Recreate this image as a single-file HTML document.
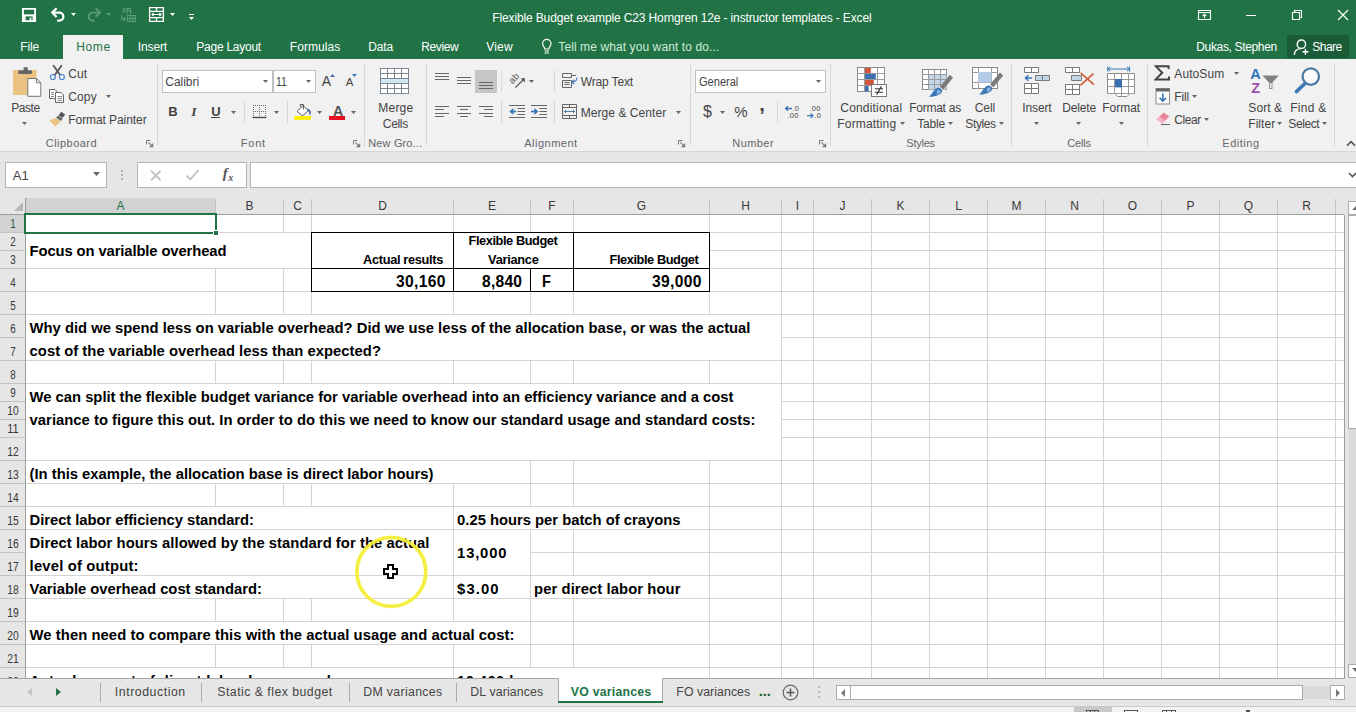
<!DOCTYPE html>
<html><head><meta charset="utf-8"><title>Excel</title><style>
html,body{margin:0;padding:0;}
body{width:1356px;height:712px;overflow:hidden;position:relative;background:#fff;font-family:"Liberation Sans", sans-serif;}
#r{position:absolute;left:0;top:0;width:1356px;height:712px;overflow:hidden;}
#r div,#r svg,#r span{position:absolute;}
#r span{white-space:pre;line-height:1;}
</style></head><body><div id="r">
<div style="left:0px;top:0px;width:1356px;height:59px;background:#217346;"></div>
<div style="left:0px;top:59px;width:1356px;height:93px;background:#f1f1f1;"></div>
<div style="left:0px;top:151px;width:1356px;height:1px;background:#d6d6d6;"></div>
<div style="left:0px;top:152px;width:1356px;height:46px;background:#e6e6e6;"></div>
<div style="left:63px;top:35px;width:60px;height:25px;background:#f1f1f1;"></div>
<div style="left:1287px;top:35px;width:62px;height:23px;background:#1a5c38;"></div>
<span style="top:11px;line-height:14px;font-size:12px;color:#ffffff;letter-spacing:-0.136px;left:492.30px;">Flexible Budget example C23 Horngren 12e - instructor templates - Excel</span>
<span style="top:40px;line-height:14px;font-size:12px;color:#ffffff;letter-spacing:-0.168px;left:20.30px;">File</span>
<span style="top:40px;line-height:14px;font-size:12px;color:#217346;letter-spacing:0.608px;left:76.30px;">Home</span>
<span style="top:40px;line-height:14px;font-size:12px;color:#ffffff;letter-spacing:-0.135px;left:137.80px;">Insert</span>
<span style="top:40px;line-height:14px;font-size:12px;color:#ffffff;letter-spacing:-0.255px;left:196.30px;">Page Layout</span>
<span style="top:40px;line-height:14px;font-size:12px;color:#ffffff;letter-spacing:0.046px;left:289.80px;">Formulas</span>
<span style="top:40px;line-height:14px;font-size:12px;color:#ffffff;letter-spacing:-0.173px;left:368.30px;">Data</span>
<span style="top:40px;line-height:14px;font-size:12px;color:#ffffff;letter-spacing:-0.404px;left:421.30px;">Review</span>
<span style="top:40px;line-height:14px;font-size:12px;color:#ffffff;letter-spacing:0.181px;left:486.30px;">View</span>
<span style="top:40px;line-height:14px;font-size:12px;color:#d2ebdb;letter-spacing:0.095px;left:558.30px;">Tell me what you want to do...</span>
<span style="top:40px;line-height:14px;font-size:12px;color:#ffffff;letter-spacing:-0.350px;left:1196.30px;">Dukas, Stephen</span>
<span style="top:40px;line-height:14px;font-size:12px;color:#ffffff;letter-spacing:-0.548px;left:1312.30px;">Share</span>
<span style="top:137px;line-height:12px;font-size:11px;color:#666666;letter-spacing:0.460px;left:45.80px;">Clipboard</span>
<span style="top:137px;line-height:12px;font-size:11px;color:#666666;letter-spacing:0.751px;left:240.80px;">Font</span>
<span style="top:137px;line-height:12px;font-size:11px;color:#666666;letter-spacing:0.132px;left:368.30px;">New Gro...</span>
<span style="top:137px;line-height:12px;font-size:11px;color:#666666;letter-spacing:0.481px;left:524.30px;">Alignment</span>
<span style="top:137px;line-height:12px;font-size:11px;color:#666666;letter-spacing:0.429px;left:732.30px;">Number</span>
<span style="top:137px;line-height:12px;font-size:11px;color:#666666;letter-spacing:-0.240px;left:906.30px;">Styles</span>
<span style="top:137px;line-height:12px;font-size:11px;color:#666666;letter-spacing:-0.171px;left:1067.30px;">Cells</span>
<span style="top:137px;line-height:12px;font-size:11px;color:#666666;letter-spacing:0.522px;left:1222.30px;">Editing</span>
<div style="left:157px;top:64px;width:1px;height:82px;background:#d8d8d8;"></div>
<div style="left:364px;top:64px;width:1px;height:82px;background:#d8d8d8;"></div>
<div style="left:426px;top:64px;width:1px;height:82px;background:#d8d8d8;"></div>
<div style="left:690px;top:64px;width:1px;height:82px;background:#d8d8d8;"></div>
<div style="left:830px;top:64px;width:1px;height:82px;background:#d8d8d8;"></div>
<div style="left:1011px;top:64px;width:1px;height:82px;background:#d8d8d8;"></div>
<div style="left:1147px;top:64px;width:1px;height:82px;background:#d8d8d8;"></div>
<div style="left:1334px;top:64px;width:1px;height:82px;background:#d8d8d8;"></div>
<span style="top:101px;line-height:14px;font-size:12px;color:#444444;letter-spacing:-0.462px;left:11.30px;">Paste</span>
<svg style="left:22.0px;top:121.8px" width="5" height="3" viewBox="0 0 5 3"><path d="M0 0H5L2.5 3Z" fill="#666"/></svg>
<span style="top:67px;line-height:14px;font-size:12px;color:#444444;letter-spacing:0.076px;left:68.30px;">Cut</span>
<span style="top:90px;line-height:14px;font-size:12px;color:#444444;letter-spacing:0.108px;left:68.30px;">Copy</span>
<svg style="left:106.0px;top:94.5px" width="5" height="3" viewBox="0 0 5 3"><path d="M0 0H5L2.5 3Z" fill="#666"/></svg>
<span style="top:113px;line-height:14px;font-size:12px;color:#444444;letter-spacing:-0.078px;left:68.30px;">Format Painter</span>
<div style="left:162px;top:70px;width:111px;height:23px;background:#fff;border:1px solid #c0c0c0;box-sizing:border-box;"></div>
<div style="left:273px;top:70px;width:43px;height:23px;background:#fff;border:1px solid #c0c0c0;box-sizing:border-box;"></div>
<span style="top:75px;line-height:14px;font-size:12px;color:#444444;letter-spacing:-0.029px;left:165.30px;">Calibri</span>
<svg style="left:262.9px;top:80.0px" width="5" height="3" viewBox="0 0 5 3"><path d="M0 0H5L2.5 3Z" fill="#666"/></svg>
<span style="top:75px;line-height:14px;font-size:12px;color:#444444;transform:scaleX(0.8694);transform-origin:0 0;left:276.30px;">11</span>
<svg style="left:305.9px;top:80.0px" width="5" height="3" viewBox="0 0 5 3"><path d="M0 0H5L2.5 3Z" fill="#666"/></svg>
<span style="top:73px;line-height:16px;font-size:14px;color:#444444;letter-spacing:1.136px;left:321.80px;">A</span>
<span style="top:76px;line-height:12px;font-size:11.5px;color:#444444;letter-spacing:0.633px;left:345.80px;">A</span>
<svg style="left:330px;top:74px" width="5" height="3"><path d="M0 3H5L2.5 0Z" fill="#4f709c"/></svg>
<svg style="left:352px;top:74px" width="5" height="3"><path d="M0 0H5L2.5 3Z" fill="#3b78b8"/></svg>
<span style="top:104px;line-height:15px;font-size:13px;color:#444444;font-weight:700;letter-spacing:-0.481px;left:168.30px;">B</span>
<span style="top:104px;line-height:15px;font-size:13.5px;color:#444444;font-weight:700;font-style:italic;font-family:'Liberation Serif',serif;left:191.30px;">I</span>
<span style="top:104px;line-height:15px;font-size:13px;color:#444444;font-weight:700;letter-spacing:0.519px;left:211.30px;">U</span>
<div style="left:211px;top:117px;width:9.4px;height:1.4px;background:#444444;"></div>
<svg style="left:230.9px;top:110.8px" width="5" height="3" viewBox="0 0 5 3"><path d="M0 0H5L2.5 3Z" fill="#666"/></svg>
<div style="left:244px;top:101px;width:1px;height:22px;background:#d8d8d8;"></div>
<svg style="left:273.9px;top:110.8px" width="5" height="3" viewBox="0 0 5 3"><path d="M0 0H5L2.5 3Z" fill="#666"/></svg>
<div style="left:287px;top:101px;width:1px;height:22px;background:#d8d8d8;"></div>
<svg style="left:317.0px;top:110.5px" width="5" height="3" viewBox="0 0 5 3"><path d="M0 0H5L2.5 3Z" fill="#666"/></svg>
<svg style="left:351.0px;top:110.5px" width="5" height="3" viewBox="0 0 5 3"><path d="M0 0H5L2.5 3Z" fill="#666"/></svg>
<span style="top:101px;line-height:14px;font-size:12px;color:#444444;letter-spacing:0.206px;left:378.30px;">Merge</span>
<span style="top:117px;line-height:14px;font-size:12px;color:#444444;letter-spacing:-0.333px;left:382.80px;">Cells</span>
<div style="left:474.5px;top:70px;width:22.5px;height:22.5px;background:#c6c6c6;"></div>
<div style="left:501px;top:70px;width:1px;height:22px;background:#d8d8d8;"></div>
<div style="left:501px;top:101px;width:1px;height:22px;background:#d8d8d8;"></div>
<div style="left:554px;top:70px;width:1px;height:22px;background:#d8d8d8;"></div>
<div style="left:554px;top:101px;width:1px;height:22px;background:#d8d8d8;"></div>
<svg style="left:529.1px;top:79.8px" width="5" height="3" viewBox="0 0 5 3"><path d="M0 0H5L2.5 3Z" fill="#666"/></svg>
<span style="top:75px;line-height:14px;font-size:12px;color:#444444;letter-spacing:-0.155px;left:580.80px;">Wrap Text</span>
<span style="top:106px;line-height:14px;font-size:12px;color:#444444;letter-spacing:0.049px;left:580.80px;">Merge &amp; Center</span>
<svg style="left:676.0px;top:110.5px" width="5" height="3" viewBox="0 0 5 3"><path d="M0 0H5L2.5 3Z" fill="#666"/></svg>
<div style="left:695px;top:70px;width:131px;height:23px;background:#fff;border:1px solid #c0c0c0;box-sizing:border-box;"></div>
<span style="top:75px;line-height:14px;font-size:12px;color:#444444;transform:scaleX(0.9212);transform-origin:0 0;left:699.30px;">General</span>
<svg style="left:816.0px;top:80.0px" width="5" height="3" viewBox="0 0 5 3"><path d="M0 0H5L2.5 3Z" fill="#666"/></svg>
<span style="top:103px;line-height:17px;font-size:16px;color:#444444;letter-spacing:-0.286px;left:703.10px;">$</span>
<svg style="left:720.0px;top:110.5px" width="5" height="3" viewBox="0 0 5 3"><path d="M0 0H5L2.5 3Z" fill="#666"/></svg>
<span style="top:103px;line-height:17px;font-size:15px;color:#444444;letter-spacing:0.706px;left:734.30px;">%</span>
<span style="top:93px;line-height:22px;font-size:20px;color:#444444;font-weight:700;left:759.30px;">,</span>
<div style="left:777px;top:101px;width:1px;height:22px;background:#d8d8d8;"></div>
<span style="top:101px;line-height:14px;font-size:12px;color:#444444;letter-spacing:0.179px;left:840.30px;">Conditional</span>
<span style="top:117px;line-height:14px;font-size:12px;color:#444444;letter-spacing:0.165px;left:837.30px;">Formatting</span>
<svg style="left:899.5px;top:121.5px" width="5" height="3" viewBox="0 0 5 3"><path d="M0 0H5L2.5 3Z" fill="#666"/></svg>
<span style="top:101px;line-height:14px;font-size:12px;color:#444444;letter-spacing:-0.272px;left:909.30px;">Format as</span>
<span style="top:117px;line-height:14px;font-size:12px;color:#444444;letter-spacing:-0.212px;left:917.30px;">Table</span>
<svg style="left:947.5px;top:121.5px" width="5" height="3" viewBox="0 0 5 3"><path d="M0 0H5L2.5 3Z" fill="#666"/></svg>
<span style="top:101px;line-height:14px;font-size:12px;color:#444444;letter-spacing:-0.111px;left:974.80px;">Cell</span>
<span style="top:117px;line-height:14px;font-size:12px;color:#444444;letter-spacing:-0.370px;left:965.30px;">Styles</span>
<svg style="left:999.0px;top:121.5px" width="5" height="3" viewBox="0 0 5 3"><path d="M0 0H5L2.5 3Z" fill="#666"/></svg>
<span style="top:101px;line-height:14px;font-size:12px;color:#444444;letter-spacing:-0.135px;left:1022.30px;">Insert</span>
<svg style="left:1034.0px;top:121.8px" width="5" height="3" viewBox="0 0 5 3"><path d="M0 0H5L2.5 3Z" fill="#666"/></svg>
<span style="top:101px;line-height:14px;font-size:12px;color:#444444;letter-spacing:-0.169px;left:1062.30px;">Delete</span>
<svg style="left:1075.5px;top:121.8px" width="5" height="3" viewBox="0 0 5 3"><path d="M0 0H5L2.5 3Z" fill="#666"/></svg>
<span style="top:101px;line-height:14px;font-size:12px;color:#444444;letter-spacing:-0.035px;left:1102.30px;">Format</span>
<svg style="left:1118.5px;top:121.8px" width="5" height="3" viewBox="0 0 5 3"><path d="M0 0H5L2.5 3Z" fill="#666"/></svg>
<span style="top:67px;line-height:14px;font-size:12px;color:#444444;letter-spacing:0.080px;left:1174.30px;">AutoSum</span>
<svg style="left:1233.5px;top:72.0px" width="5" height="3" viewBox="0 0 5 3"><path d="M0 0H5L2.5 3Z" fill="#666"/></svg>
<span style="top:90px;line-height:14px;font-size:12px;color:#444444;letter-spacing:-0.163px;left:1174.30px;">Fill</span>
<svg style="left:1191.5px;top:94.5px" width="5" height="3" viewBox="0 0 5 3"><path d="M0 0H5L2.5 3Z" fill="#666"/></svg>
<span style="top:113px;line-height:14px;font-size:12px;color:#444444;letter-spacing:-0.462px;left:1174.30px;">Clear</span>
<svg style="left:1203.5px;top:117.5px" width="5" height="3" viewBox="0 0 5 3"><path d="M0 0H5L2.5 3Z" fill="#666"/></svg>
<span style="top:101px;line-height:14px;font-size:12px;color:#444444;letter-spacing:0.096px;left:1248.30px;">Sort &amp;</span>
<span style="top:117px;line-height:14px;font-size:12px;color:#444444;letter-spacing:0.034px;left:1248.30px;">Filter</span>
<svg style="left:1276.5px;top:121.5px" width="5" height="3" viewBox="0 0 5 3"><path d="M0 0H5L2.5 3Z" fill="#666"/></svg>
<span style="top:101px;line-height:14px;font-size:12px;color:#444444;letter-spacing:0.231px;left:1290.30px;">Find &amp;</span>
<span style="top:117px;line-height:14px;font-size:12px;color:#444444;letter-spacing:-0.404px;left:1288.30px;">Select</span>
<svg style="left:1322.0px;top:121.5px" width="5" height="3" viewBox="0 0 5 3"><path d="M0 0H5L2.5 3Z" fill="#666"/></svg>
<svg style="left:21px;top:7px" width="16" height="16" viewBox="0 0 16 16"><path d="M1.9 1.9H14.1V14.1H1.9Z" fill="none" stroke="#fff" stroke-width="1.9"/><path d="M1.9 7.4H14.1V9.4H1.9Z" fill="#fff"/><path d="M2 9H4.6V14H2ZM11.6 9H14V14H11.6Z" fill="#fff"/><path d="M8.6 10.6H10.4V14.4H8.6Z" fill="#fff"/></svg>
<svg style="left:50px;top:7px" width="17" height="16" viewBox="0 0 17 16"><path d="M2.4 5.6H9.4A4 4 0 0 1 9.4 13.6H7.2" fill="none" stroke="#fff" stroke-width="2.2"/><path d="M6.6 1.2L2.2 5.6L6.6 10" fill="none" stroke="#fff" stroke-width="2.2"/></svg>
<svg style="left:71.0px;top:13.0px" width="5" height="3" viewBox="0 0 5 3"><path d="M0 0H5L2.5 3Z" fill="#fff"/></svg>
<svg style="left:85px;top:7px" width="17" height="16" viewBox="0 0 17 16"><path d="M14.8 5.6H7.6A4 4 0 0 0 7.6 13.6H9.6" fill="none" stroke="#5a9c78" stroke-width="1.9"/><path d="M10.6 1.4L15 5.6L10.6 9.8" fill="none" stroke="#5a9c78" stroke-width="1.9"/></svg>
<svg style="left:106.2px;top:13.0px" width="5" height="3" viewBox="0 0 5 3"><path d="M0 0H5L2.5 3Z" fill="#5a9c78"/></svg>
<svg style="left:120px;top:7px" width="17" height="16" viewBox="0 0 17 16"><g stroke="#5a9c78" stroke-width="1.1" fill="none"><path d="M3.5 1.5H10.5V7.5M3.5 1.5V6M3.5 4H10.5M7 1.5V7.5"/><path d="M7.5 8.5H15.5V14.5H7.5ZM7.5 11.5H15.5M10.2 8.5V14.5M12.9 8.5V14.5"/><path d="M1.5 8V12H5M3.4 10L5.4 12L3.4 14"/></g></svg>
<svg style="left:148px;top:6px" width="17" height="17" viewBox="0 0 17 17"><g stroke="#fff" stroke-width="1.3" fill="none"><path d="M1.6 1.6H15.4V15.4H1.6Z"/><path d="M1.6 5.3H15.4M1.6 11.7H15.4M8.5 1.6V5.3M8.5 11.7V15.4"/><path d="M4 8.5H13M5.6 6.9L4 8.5L5.6 10.1M11.4 6.9L13 8.5L11.4 10.1" stroke-width="1.1"/></g></svg>
<svg style="left:169.8px;top:13.0px" width="5" height="3" viewBox="0 0 5 3"><path d="M0 0H5L2.5 3Z" fill="#fff"/></svg>
<div style="left:189px;top:14px;width:5px;height:1px;background:#fff;"></div>
<svg style="left:189.0px;top:16.7px" width="5" height="3" viewBox="0 0 5 3"><path d="M0 0H5L2.5 3Z" fill="#fff"/></svg>
<svg style="left:540px;top:38px" width="14" height="17" viewBox="0 0 14 17"><g fill="none" stroke="#fff" stroke-width="1.2"><path d="M4.8 11C4.8 9.2 2.6 8.4 2.6 5.6A4.2 4.2 0 0 1 11 5.6C11 8.4 8.8 9.2 8.8 11Z"/><path d="M4.6 13H9M4.6 15H9"/></g></svg>
<svg style="left:1197px;top:9px" width="15" height="12" viewBox="0 0 15 12"><g fill="none" stroke="#fff" stroke-width="1.1"><path d="M1.5 1.5H13.5V10.5H1.5Z"/><path d="M1.5 3.6H13.5"/><path d="M7.5 9.2V5.4M5.6 7.2L7.5 5.3L9.4 7.2"/></g></svg>
<div style="left:1246px;top:15px;width:10px;height:1px;background:#fff;"></div>
<svg style="left:1291px;top:9px" width="12" height="12" viewBox="0 0 12 12"><g fill="none" stroke="#fff" stroke-width="1.1"><path d="M1.5 3.5H8.5V10.5H1.5Z"/><path d="M3.5 3.5V1.5H10.5V8.5H8.5"/></g></svg>
<svg style="left:1337px;top:9px" width="12" height="12" viewBox="0 0 12 12"><path d="M1 1L11 11M11 1L1 11" stroke="#fff" stroke-width="1.2" fill="none"/></svg>
<svg style="left:1293px;top:38px" width="17" height="18" viewBox="0 0 17 18"><g fill="none" stroke="#fff" stroke-width="1.4"><circle cx="8.4" cy="6.2" r="4.2"/><path d="M1.2 17C1.6 13 4.4 10.6 8 10.6"/><path d="M9.4 13.8H15.4M12.4 10.8V16.8"/></g></svg>
<svg style="left:12px;top:66px" width="31" height="32" viewBox="0 0 31 32"><rect x="1" y="4" width="23.5" height="25" fill="#eac282"/>
<path d="M6.3 8V4.3H11.6V1.3H15.7V4.3H19.9V8Z" fill="#666"/>
<path d="M15.8 12.5H24.6L28.8 16.8V30.3H15.8Z" fill="#fff" stroke="#777" stroke-width="1"/>
<path d="M24.6 12.5V16.8H28.8" fill="none" stroke="#777" stroke-width="1"/></svg>
<svg style="left:49px;top:64px" width="17" height="17" viewBox="0 0 17 17"><path d="M4.2 1.2L11.4 11.2M12.8 1.2L5.6 11.2" stroke="#555" stroke-width="1.8" fill="none"/>
<circle cx="3.9" cy="13" r="2.5" fill="none" stroke="#4a86c8" stroke-width="1.2"/><circle cx="12.9" cy="13" r="2.5" fill="none" stroke="#4a86c8" stroke-width="1.2"/></svg>
<svg style="left:48px;top:88px" width="18" height="16" viewBox="0 0 18 16"><g fill="#fff" stroke="#666" stroke-width="1"><path d="M1.5 1.5H7L9.5 4V10.5H1.5Z"/><path d="M7.5 4.5H13L15.5 7V14.5H7.5Z"/></g>
<path d="M3 4.5H6M3 6.5H6M3 8.5H6M9.5 8.5H14M9.5 10.5H14M9.5 12.5H14" stroke="#777" stroke-width="0.9"/></svg>
<svg style="left:49px;top:111px" width="17" height="16" viewBox="0 0 17 16"><path d="M12 0.8L16.2 3.6L13.6 6.8L9.8 4.4Z" fill="#555"/><path d="M9.2 4.4L13.8 7.4L11.8 10L7 6.8Z" fill="#6a6a6a"/>
<path d="M6.6 7L11.6 10.4L6.2 15.4L0.4 9.4Z" fill="#eac282"/></svg>
<svg style="left:252px;top:104px" width="15" height="15" viewBox="0 0 15 15"><g stroke="#666" stroke-width="1" stroke-dasharray="1 1" fill="none"><path d="M1 1.5H14M1 7.5H14M1.5 1V13M7.5 1V13M13.5 1V13"/></g><path d="M0.6 13.5H14.4" stroke="#444" stroke-width="1.3"/></svg>
<svg style="left:294px;top:103px" width="18" height="18" viewBox="0 0 18 18"><path d="M3.2 8.3L9.1 2.7L14.4 7.7L8.5 12.9Z" fill="#fff" stroke="#555" stroke-width="1"/>
<path d="M6.3 4V1.5H9.4V6.4" fill="none" stroke="#555" stroke-width="1"/>
<path d="M13.2 5.4C16 5.8 17.6 8.4 16.6 11C16.2 12 15.6 12.4 15.2 11.8C15.6 9.6 15 8.4 13.4 7.4Z" fill="#4a6fa5"/>
<rect x="0.3" y="13" width="16.7" height="3.8" fill="#ffee00"/></svg>
<span style="top:103px;line-height:16px;font-size:14.2px;color:#555;font-weight:700;letter-spacing:-0.456px;left:333.10px;">A</span>
<div style="left:329px;top:116px;width:16px;height:4px;background:#e81123;"></div>
<svg style="left:380px;top:68px" width="29" height="26" viewBox="0 0 29 26"><rect x="0.5" y="0.5" width="28" height="25" fill="#fff" stroke="#7a8793" stroke-width="1"/><rect x="1" y="10.6" width="27" height="5" fill="#d3e6f3"/><path d="M0.5 5.5H28.5M0.5 10.5H28.5M0.5 15.5H28.5M0.5 20.5H28.5" stroke="#7a8793" stroke-width="1"/><path d="M7.5 0.5V10.5M14.5 0.5V10.5M21.5 0.5V10.5M7.5 15.5V25.5M14.5 15.5V25.5M21.5 15.5V25.5" stroke="#7a8793" stroke-width="1"/></svg>
<div style="left:435px;top:73px;width:14px;height:1px;background:#666;"></div>
<div style="left:435px;top:76px;width:14px;height:1px;background:#666;"></div>
<div style="left:435px;top:79px;width:14px;height:1px;background:#666;"></div>
<div style="left:457px;top:77px;width:14px;height:1px;background:#666;"></div>
<div style="left:457px;top:80px;width:14px;height:1px;background:#666;"></div>
<div style="left:457px;top:83px;width:14px;height:1px;background:#666;"></div>
<div style="left:479px;top:82px;width:14px;height:1px;background:#666;"></div>
<div style="left:479px;top:85px;width:14px;height:1px;background:#666;"></div>
<div style="left:479px;top:88px;width:14px;height:1px;background:#666;"></div>
<div style="left:435px;top:106px;width:14px;height:1px;background:#666;"></div>
<div style="left:435px;top:109px;width:9px;height:1px;background:#666;"></div>
<div style="left:435px;top:113px;width:14px;height:1px;background:#666;"></div>
<div style="left:435px;top:116px;width:9px;height:1px;background:#666;"></div>
<div style="left:457px;top:106px;width:14px;height:1px;background:#666;"></div>
<div style="left:460px;top:109px;width:8px;height:1px;background:#666;"></div>
<div style="left:457px;top:113px;width:14px;height:1px;background:#666;"></div>
<div style="left:460px;top:116px;width:8px;height:1px;background:#666;"></div>
<div style="left:479px;top:106px;width:14px;height:1px;background:#666;"></div>
<div style="left:484px;top:109px;width:9px;height:1px;background:#666;"></div>
<div style="left:479px;top:113px;width:14px;height:1px;background:#666;"></div>
<div style="left:484px;top:116px;width:9px;height:1px;background:#666;"></div>
<svg style="left:508px;top:72px" width="19" height="17" viewBox="0 0 19 17"><path d="M7.4 15.6L16.2 6.8" stroke="#555" stroke-width="1.3" fill="none"/><path d="M12.6 6.2H16.9V10.5Z" fill="#555"/>
<g transform="translate(4.6 12.4) rotate(-47)"><text x="0" y="0" font-family='"Liberation Sans",sans-serif' font-size="9.6" fill="#555">ab</text></g></svg>
<svg style="left:561px;top:72px" width="18" height="17" viewBox="0 0 18 17"><g fill="none" stroke="#666" stroke-width="1"><path d="M1.5 1.5H10.5V5.5H1.5Z"/><path d="M10.5 3.5H15"/><path d="M1.5 8.5H10.5V15.5H1.5Z"/><path d="M3.4 10.5H8.6M3.4 12.5H8.6"/></g>
<path d="M16 5.6C16 8.6 14 10 11.2 10" fill="none" stroke="#3b78b8" stroke-width="1.1"/><path d="M13.2 7.8L10.8 10L13.2 12.2" fill="none" stroke="#3b78b8" stroke-width="1.1"/></svg>
<svg style="left:509px;top:105px" width="17" height="14" viewBox="0 0 17 14"><path d="M0 0.5H16M8.4 3.5H16M8.4 6.5H16M8.4 9.5H16M0 12.5H16" stroke="#666" stroke-width="1"/><path d="M7 6.5H1.6" fill="none" stroke="#3b78b8" stroke-width="1.8"/><path d="M4.4 3L0.4 6.5L4.4 10Z" fill="#3b78b8"/></svg>
<svg style="left:531px;top:105px" width="17" height="14" viewBox="0 0 17 14"><path d="M0 0.5H16M8.4 3.5H16M8.4 6.5H16M8.4 9.5H16M0 12.5H16" stroke="#666" stroke-width="1"/><path d="M0 6.5H5.4" fill="none" stroke="#3b78b8" stroke-width="1.8"/><path d="M3.4 3L7.4 6.5L3.4 10Z" fill="#3b78b8"/></svg>
<svg style="left:562px;top:104px" width="16" height="16" viewBox="0 0 16 16"><g fill="none" stroke="#666" stroke-width="1"><path d="M0.5 0.5H14.5V14.5H0.5Z"/><path d="M0.5 3.5H14.5M0.5 11.5H14.5M7.5 0.5V3.5M7.5 11.5V14.5"/></g>
<path d="M2.4 7.5H12.6M4 6L2.4 7.5L4 9M11 6L12.6 7.5L11 9" fill="none" stroke="#4a7ba5" stroke-width="1"/></svg>
<svg style="left:784px;top:105px" width="17" height="14" viewBox="0 0 17 14"><text x="8.4" y="5.6" font-family='"Liberation Sans",sans-serif' font-size="7.4" letter-spacing="0.35" fill="#444">.0</text><text x="3.4" y="13.1" font-family='"Liberation Sans",sans-serif' font-size="7.4" letter-spacing="0.35" fill="#444">.00</text><path d="M8 3.5H1.6M4 1.2L1.6 3.5L4 5.8" fill="none" stroke="#3b78b8" stroke-width="1.3"/></svg>
<svg style="left:807px;top:105px" width="17" height="14" viewBox="0 0 17 14"><text x="2.4" y="5.6" font-family='"Liberation Sans",sans-serif' font-size="7.4" letter-spacing="0.35" fill="#444">.00</text><text x="7.4" y="13.1" font-family='"Liberation Sans",sans-serif' font-size="7.4" letter-spacing="0.35" fill="#444">.0</text><path d="M0 10.7H6M3.6 8.4L6 10.7L3.6 13" fill="none" stroke="#3b78b8" stroke-width="1.3"/></svg>
<svg style="left:857px;top:67px" width="31" height="31" viewBox="0 0 31 31"><rect x="0.5" y="0.5" width="27" height="24" fill="#fff" stroke="#8a8a8a"/><path d="M0.5 6.5H27.5M0.5 12.5H27.5M0.5 18.5H27.5M7.5 0.5V24.5M20.5 0.5V24.5" stroke="#9a9a9a" stroke-width="1" fill="none"/><rect x="8" y="1" width="5.8" height="5" fill="#d0533c"/><rect x="8" y="7" width="10.8" height="5" fill="#3a6fb0"/><rect x="8" y="13" width="8.8" height="5" fill="#d0533c"/><rect x="8" y="19" width="3.6" height="5.4" fill="#3a6fb0"/><rect x="14.5" y="17.5" width="15" height="12" fill="#fff" stroke="#777"/><path d="M18 21.8H26M18 25.2H26M24.4 19.4L19.6 27.6" stroke="#333" stroke-width="1.1" fill="none"/></svg>
<svg style="left:922px;top:69px" width="33" height="30" viewBox="0 0 33 30"><rect x="0.5" y="0.5" width="24" height="20" fill="#fff" stroke="#8a8a8a"/><rect x="6.5" y="5.5" width="18" height="15" fill="#c5d6ea"/><path d="M0.5 5.5H24.5M0.5 10.5H24.5M0.5 15.5H24.5M6.5 0.5V20.5M12.5 0.5V20.5M18.5 0.5V20.5" stroke="#9a9a9a" fill="none"/><g transform="translate(6.4 5.6)"><path d="M21.4 0.2L24.6 3.2L14.6 15.2L11.4 12.2Z" fill="#7a7a7a"/><path d="M11.2 12.4L14.6 15.4" stroke="#f1f1f1" stroke-width="1"/><path d="M10.6 13L14 16.2C13 20 7 22.6 0.4 22.2C4 20.4 4.6 14 10.6 13Z" fill="#3b78b8"/><path d="M9.4 15.4C10.4 14.8 12 15.8 12.2 17.2C11.6 18.6 10 19.6 8.6 19.8C8 18.6 8.4 16.2 9.4 15.4Z" fill="#8fb3dd"/></g></svg>
<svg style="left:972px;top:67px" width="33" height="30" viewBox="0 0 33 30"><rect x="0.5" y="0.5" width="25" height="21" fill="#fff" stroke="#8a8a8a"/><path d="M0.5 5.5H25.5M0.5 15.5H25.5M6.5 0.5V21.5M19.5 0.5V21.5" stroke="#9a9a9a" fill="none"/><rect x="6" y="5" width="13.5" height="10.6" fill="#b4cbe6"/><g transform="translate(6.6 5.2)"><path d="M21.4 0.2L24.6 3.2L14.6 15.2L11.4 12.2Z" fill="#7a7a7a"/><path d="M11.2 12.4L14.6 15.4" stroke="#f1f1f1" stroke-width="1"/><path d="M10.6 13L14 16.2C13 20 7 22.6 0.4 22.2C4 20.4 4.6 14 10.6 13Z" fill="#3b78b8"/><path d="M9.4 15.4C10.4 14.8 12 15.8 12.2 17.2C11.6 18.6 10 19.6 8.6 19.8C8 18.6 8.4 16.2 9.4 15.4Z" fill="#8fb3dd"/></g></svg>
<svg style="left:1024px;top:67px" width="27" height="28" viewBox="0 0 27 28"><g fill="#fff" stroke="#7a7a7a"><path d="M0.5 0.5H14.5V5.5H0.5ZM7.5 0.5V5.5"/><path d="M0.5 16.5H14.5V26.5H0.5ZM7.5 16.5V26.5M0.5 21.5H14.5"/></g><g fill="#c2d4e8" stroke="#7a7a7a"><path d="M11.5 8.5H25.5V13.5H11.5ZM18.5 8.5V13.5"/></g><path d="M8.2 11H1.6M4.4 8.2L1.4 11L4.4 13.8" fill="none" stroke="#3b78b8" stroke-width="1.5"/></svg>
<svg style="left:1065px;top:67px" width="31" height="29" viewBox="0 0 31 29"><g fill="#fff" stroke="#7a7a7a"><path d="M0.5 0.5H14.5V5.5H0.5ZM7.5 0.5V5.5"/><path d="M0.5 17.5H14.5V27.5H0.5ZM7.5 17.5V27.5M0.5 22.5H14.5"/></g><g fill="#c2d4e8" stroke="#7a7a7a"><path d="M6.5 8.5H16.5V13.5H6.5Z"/></g><path d="M15.6 5.8L29 17.6M28.4 6.6L15.4 18.4" fill="none" stroke="#d0603c" stroke-width="1.7"/></svg>
<svg style="left:1107px;top:65.5px" width="29" height="32" viewBox="0 0 29 32"><path d="M0.8 3H22.6M0.8 0.4V5.6M22.6 0.4V5.6M3.4 0.8L1 3L3.4 5.2M20 0.8L22.4 3L20 5.2" fill="none" stroke="#3b78b8" stroke-width="1"/><path d="M0.5 7.5H27.5V27.5H23L20 30.5H10.5L8 27.5H0.5Z" fill="#fff" stroke="#8a8a8a"/><path d="M0.5 13.5H27.5M0.5 20.5H27.5M7.5 7.5V27.5M14.5 7.5V30M21.5 7.5V27.5M0.5 27.5H27.5" stroke="#9a9a9a" fill="none"/><rect x="8" y="13" width="7" height="8.4" fill="#3a6fb0"/></svg>
<svg style="left:1154px;top:65px" width="17" height="16" viewBox="0 0 17 16"><path d="M14.6 4V1.2H1.8L8.2 7.8L1.8 14.4H15V11.4" fill="none" stroke="#444" stroke-width="2" stroke-linejoin="miter"/></svg>
<svg style="left:1155px;top:88px" width="16" height="17" viewBox="0 0 16 17"><rect x="1" y="0.5" width="13.5" height="15.5" fill="#fff" stroke="#8a8a8a"/><rect x="1" y="0.5" width="13.5" height="3" fill="#666"/><path d="M7.8 5.6V13M4.6 9.8L7.8 13L11 9.8" fill="none" stroke="#3b78b8" stroke-width="1.7"/></svg>
<svg style="left:1155px;top:111px" width="17" height="15" viewBox="0 0 17 15"><path d="M8.6 1.4L14.4 5.6L7.4 12.6L1.6 8.2Z" fill="#e8859b"/><path d="M4.4 5.6L10.2 10L7.4 12.6L1.6 8.2Z" fill="#f3b6c3"/><path d="M6 13.5H15" stroke="#666" stroke-width="1"/></svg>
<span style="top:66px;line-height:16px;font-size:14.5px;color:#2e75b6;font-weight:700;letter-spacing:1.531px;left:1250.30px;">A</span>
<span style="top:80px;line-height:16px;font-size:14.5px;color:#9b4fb0;font-weight:700;letter-spacing:1.656px;left:1251.30px;">Z</span>
<svg style="left:1262px;top:75px" width="18" height="15" viewBox="0 0 18 15"><path d="M0.4 0.6H16.8L10.4 7.4V14H7V7.4Z" fill="#808080"/><path d="M7.8 8H9.6V13.2H7.8Z" fill="#f1f1f1"/></svg>
<svg style="left:1293px;top:66px" width="30" height="29" viewBox="0 0 30 29"><circle cx="17.8" cy="10.6" r="8.2" fill="#fafafa" stroke="#4a7ba5" stroke-width="2.2"/><path d="M11.2 18.2L3.4 25.6" stroke="#3b78b8" stroke-width="3.6" stroke-linecap="round"/></svg>
<svg style="left:145.5px;top:140px" width="8" height="8" viewBox="0 0 8 8"><path d="M0.5 4.4V0.5H4.4" fill="none" stroke="#777" stroke-width="1"/><path d="M2.4 2.4L5.6 5.6" fill="none" stroke="#777" stroke-width="1.1"/><path d="M7.2 3V7.2H3Z" fill="#777"/></svg>
<svg style="left:353px;top:140px" width="8" height="8" viewBox="0 0 8 8"><path d="M0.5 4.4V0.5H4.4" fill="none" stroke="#777" stroke-width="1"/><path d="M2.4 2.4L5.6 5.6" fill="none" stroke="#777" stroke-width="1.1"/><path d="M7.2 3V7.2H3Z" fill="#777"/></svg>
<svg style="left:677.5px;top:140px" width="8" height="8" viewBox="0 0 8 8"><path d="M0.5 4.4V0.5H4.4" fill="none" stroke="#777" stroke-width="1"/><path d="M2.4 2.4L5.6 5.6" fill="none" stroke="#777" stroke-width="1.1"/><path d="M7.2 3V7.2H3Z" fill="#777"/></svg>
<svg style="left:819px;top:140px" width="8" height="8" viewBox="0 0 8 8"><path d="M0.5 4.4V0.5H4.4" fill="none" stroke="#777" stroke-width="1"/><path d="M2.4 2.4L5.6 5.6" fill="none" stroke="#777" stroke-width="1.1"/><path d="M7.2 3V7.2H3Z" fill="#777"/></svg>
<svg style="left:1346px;top:140px" width="10" height="7" viewBox="0 0 10 7"><path d="M1 5.6L5 1.6L9 5.6" fill="none" stroke="#555" stroke-width="1.5"/></svg>
<div style="left:5px;top:162px;width:102px;height:26px;background:#fff;border:1px solid #b4b4b4;box-sizing:border-box;"></div>
<span style="top:168px;line-height:15px;font-size:13px;color:#444444;letter-spacing:0.004px;left:12.80px;">A1</span>
<svg style="left:92.5px;top:172.0px" width="7" height="4" viewBox="0 0 7 4"><path d="M0 0H7L3.5 4Z" fill="#666"/></svg>
<div style="left:121px;top:170px;width:2px;height:2px;background:#b0b0b0;"></div>
<div style="left:121px;top:174px;width:2px;height:2px;background:#b0b0b0;"></div>
<div style="left:121px;top:178px;width:2px;height:2px;background:#b0b0b0;"></div>
<div style="left:137px;top:162px;width:110px;height:26px;background:#fff;border:1px solid #b4b4b4;box-sizing:border-box;"></div>
<div style="left:250px;top:162px;width:1110px;height:26px;background:#fff;border:1px solid #b4b4b4;box-sizing:border-box;"></div>
<svg style="left:150px;top:170px" width="12" height="11"><path d="M1 0.8L10.6 10.2M10.6 0.8L1 10.2" stroke="#c4c4c4" stroke-width="1.9" fill="none"/></svg>
<svg style="left:185px;top:169px" width="15" height="12"><path d="M1.4 6.6L5.4 10.4L13.4 1.2" stroke="#c4c4c4" stroke-width="2" fill="none"/></svg>
<span style="top:165px;line-height:17px;font-size:15px;color:#555;font-weight:700;font-style:italic;font-family:'Liberation Serif',serif;left:222.80px;">f</span>
<span style="top:172px;line-height:11px;font-size:10px;color:#555;font-weight:700;font-style:italic;font-family:'Liberation Serif',serif;left:228.30px;">x</span>
<svg style="left:1348px;top:172px" width="9" height="6"><path d="M1 1L4.5 4.5L8 1" stroke="#555" stroke-width="1.6" fill="none"/></svg>
<div style="left:0px;top:198px;width:1356px;height:17px;background:#e6e6e6;"></div>
<div style="left:0px;top:215px;width:25px;height:463px;background:#e6e6e6;"></div>
<div style="left:25px;top:215px;width:1319px;height:463px;background:#fff;"></div>
<div style="left:215px;top:215px;width:1px;height:463px;background:#d4d4d4;"></div>
<div style="left:283px;top:215px;width:1px;height:463px;background:#d4d4d4;"></div>
<div style="left:311px;top:215px;width:1px;height:463px;background:#d4d4d4;"></div>
<div style="left:453px;top:215px;width:1px;height:463px;background:#d4d4d4;"></div>
<div style="left:530px;top:215px;width:1px;height:463px;background:#d4d4d4;"></div>
<div style="left:573px;top:215px;width:1px;height:463px;background:#d4d4d4;"></div>
<div style="left:709px;top:215px;width:1px;height:463px;background:#d4d4d4;"></div>
<div style="left:781px;top:215px;width:1px;height:463px;background:#d4d4d4;"></div>
<div style="left:813px;top:215px;width:1px;height:463px;background:#d4d4d4;"></div>
<div style="left:871px;top:215px;width:1px;height:463px;background:#d4d4d4;"></div>
<div style="left:929px;top:215px;width:1px;height:463px;background:#d4d4d4;"></div>
<div style="left:987px;top:215px;width:1px;height:463px;background:#d4d4d4;"></div>
<div style="left:1045px;top:215px;width:1px;height:463px;background:#d4d4d4;"></div>
<div style="left:1103px;top:215px;width:1px;height:463px;background:#d4d4d4;"></div>
<div style="left:1161px;top:215px;width:1px;height:463px;background:#d4d4d4;"></div>
<div style="left:1219px;top:215px;width:1px;height:463px;background:#d4d4d4;"></div>
<div style="left:1277px;top:215px;width:1px;height:463px;background:#d4d4d4;"></div>
<div style="left:1335px;top:215px;width:1px;height:463px;background:#d4d4d4;"></div>
<div style="left:25px;top:232px;width:1319px;height:1px;background:#d4d4d4;"></div>
<div style="left:25px;top:250px;width:1319px;height:1px;background:#d4d4d4;"></div>
<div style="left:25px;top:268px;width:1319px;height:1px;background:#d4d4d4;"></div>
<div style="left:25px;top:291px;width:1319px;height:1px;background:#d4d4d4;"></div>
<div style="left:25px;top:314px;width:1319px;height:1px;background:#d4d4d4;"></div>
<div style="left:25px;top:337px;width:1319px;height:1px;background:#d4d4d4;"></div>
<div style="left:25px;top:360px;width:1319px;height:1px;background:#d4d4d4;"></div>
<div style="left:25px;top:383px;width:1319px;height:1px;background:#d4d4d4;"></div>
<div style="left:25px;top:401px;width:1319px;height:1px;background:#d4d4d4;"></div>
<div style="left:25px;top:419px;width:1319px;height:1px;background:#d4d4d4;"></div>
<div style="left:25px;top:437px;width:1319px;height:1px;background:#d4d4d4;"></div>
<div style="left:25px;top:460px;width:1319px;height:1px;background:#d4d4d4;"></div>
<div style="left:25px;top:483px;width:1319px;height:1px;background:#d4d4d4;"></div>
<div style="left:25px;top:506px;width:1319px;height:1px;background:#d4d4d4;"></div>
<div style="left:25px;top:529px;width:1319px;height:1px;background:#d4d4d4;"></div>
<div style="left:25px;top:552px;width:1319px;height:1px;background:#d4d4d4;"></div>
<div style="left:25px;top:575px;width:1319px;height:1px;background:#d4d4d4;"></div>
<div style="left:25px;top:598px;width:1319px;height:1px;background:#d4d4d4;"></div>
<div style="left:25px;top:621px;width:1319px;height:1px;background:#d4d4d4;"></div>
<div style="left:25px;top:644px;width:1319px;height:1px;background:#d4d4d4;"></div>
<div style="left:25px;top:667px;width:1319px;height:1px;background:#d4d4d4;"></div>
<div style="left:26px;top:233px;width:285px;height:35px;background:#fff;"></div>
<div style="left:312px;top:233px;width:141px;height:35px;background:#fff;"></div>
<div style="left:454px;top:233px;width:119px;height:35px;background:#fff;"></div>
<div style="left:574px;top:233px;width:135px;height:35px;background:#fff;"></div>
<div style="left:26px;top:315px;width:755px;height:45px;background:#fff;"></div>
<div style="left:26px;top:384px;width:755px;height:76px;background:#fff;"></div>
<div style="left:26px;top:461px;width:504px;height:22px;background:#fff;"></div>
<div style="left:26px;top:507px;width:427px;height:22px;background:#fff;"></div>
<div style="left:454px;top:507px;width:255px;height:22px;background:#fff;"></div>
<div style="left:26px;top:530px;width:427px;height:45px;background:#fff;"></div>
<div style="left:454px;top:530px;width:76px;height:45px;background:#fff;"></div>
<div style="left:26px;top:576px;width:427px;height:22px;background:#fff;"></div>
<div style="left:531px;top:576px;width:178px;height:22px;background:#fff;"></div>
<div style="left:26px;top:622px;width:504px;height:22px;background:#fff;"></div>
<div style="left:26px;top:668px;width:427px;height:10px;background:#fff;"></div>
<div style="left:454px;top:668px;width:255px;height:10px;background:#fff;"></div>
<div style="left:215px;top:199px;width:1px;height:15px;background:#c3c3c3;"></div>
<div style="left:283px;top:199px;width:1px;height:15px;background:#c3c3c3;"></div>
<div style="left:311px;top:199px;width:1px;height:15px;background:#c3c3c3;"></div>
<div style="left:453px;top:199px;width:1px;height:15px;background:#c3c3c3;"></div>
<div style="left:530px;top:199px;width:1px;height:15px;background:#c3c3c3;"></div>
<div style="left:573px;top:199px;width:1px;height:15px;background:#c3c3c3;"></div>
<div style="left:709px;top:199px;width:1px;height:15px;background:#c3c3c3;"></div>
<div style="left:781px;top:199px;width:1px;height:15px;background:#c3c3c3;"></div>
<div style="left:813px;top:199px;width:1px;height:15px;background:#c3c3c3;"></div>
<div style="left:871px;top:199px;width:1px;height:15px;background:#c3c3c3;"></div>
<div style="left:929px;top:199px;width:1px;height:15px;background:#c3c3c3;"></div>
<div style="left:987px;top:199px;width:1px;height:15px;background:#c3c3c3;"></div>
<div style="left:1045px;top:199px;width:1px;height:15px;background:#c3c3c3;"></div>
<div style="left:1103px;top:199px;width:1px;height:15px;background:#c3c3c3;"></div>
<div style="left:1161px;top:199px;width:1px;height:15px;background:#c3c3c3;"></div>
<div style="left:1219px;top:199px;width:1px;height:15px;background:#c3c3c3;"></div>
<div style="left:1277px;top:199px;width:1px;height:15px;background:#c3c3c3;"></div>
<div style="left:1335px;top:199px;width:1px;height:15px;background:#c3c3c3;"></div>
<div style="left:0px;top:232px;width:25px;height:1px;background:#c3c3c3;"></div>
<div style="left:0px;top:250px;width:25px;height:1px;background:#c3c3c3;"></div>
<div style="left:0px;top:268px;width:25px;height:1px;background:#c3c3c3;"></div>
<div style="left:0px;top:291px;width:25px;height:1px;background:#c3c3c3;"></div>
<div style="left:0px;top:314px;width:25px;height:1px;background:#c3c3c3;"></div>
<div style="left:0px;top:337px;width:25px;height:1px;background:#c3c3c3;"></div>
<div style="left:0px;top:360px;width:25px;height:1px;background:#c3c3c3;"></div>
<div style="left:0px;top:383px;width:25px;height:1px;background:#c3c3c3;"></div>
<div style="left:0px;top:401px;width:25px;height:1px;background:#c3c3c3;"></div>
<div style="left:0px;top:419px;width:25px;height:1px;background:#c3c3c3;"></div>
<div style="left:0px;top:437px;width:25px;height:1px;background:#c3c3c3;"></div>
<div style="left:0px;top:460px;width:25px;height:1px;background:#c3c3c3;"></div>
<div style="left:0px;top:483px;width:25px;height:1px;background:#c3c3c3;"></div>
<div style="left:0px;top:506px;width:25px;height:1px;background:#c3c3c3;"></div>
<div style="left:0px;top:529px;width:25px;height:1px;background:#c3c3c3;"></div>
<div style="left:0px;top:552px;width:25px;height:1px;background:#c3c3c3;"></div>
<div style="left:0px;top:575px;width:25px;height:1px;background:#c3c3c3;"></div>
<div style="left:0px;top:598px;width:25px;height:1px;background:#c3c3c3;"></div>
<div style="left:0px;top:621px;width:25px;height:1px;background:#c3c3c3;"></div>
<div style="left:0px;top:644px;width:25px;height:1px;background:#c3c3c3;"></div>
<div style="left:0px;top:667px;width:25px;height:1px;background:#c3c3c3;"></div>
<div style="left:0px;top:214px;width:1344px;height:1px;background:#9d9d9d;"></div>
<div style="left:25px;top:198px;width:1px;height:480px;background:#9d9d9d;"></div>
<div style="left:1344px;top:215px;width:1px;height:463px;background:#9d9d9d;"></div>
<div style="left:26px;top:198px;width:189px;height:16px;background:#d2d2d2;"></div>
<div style="left:26px;top:213px;width:190px;height:2px;background:#217346;"></div>
<div style="left:0px;top:215px;width:25px;height:17px;background:#d2d2d2;"></div>
<div style="left:24px;top:215px;width:2px;height:18px;background:#217346;"></div>
<svg style="left:14px;top:202px" width="9" height="9"><path d="M9 0V9H0Z" fill="#b7b7b7"/></svg>
<span style="top:199px;line-height:14px;font-size:12px;color:#217346;left:-79.5px;width:400px;text-align:center;">A</span>
<span style="top:199px;line-height:14px;font-size:12px;color:#383838;left:49.5px;width:400px;text-align:center;">B</span>
<span style="top:199px;line-height:14px;font-size:12px;color:#383838;left:97.5px;width:400px;text-align:center;">C</span>
<span style="top:199px;line-height:14px;font-size:12px;color:#383838;left:182.5px;width:400px;text-align:center;">D</span>
<span style="top:199px;line-height:14px;font-size:12px;color:#383838;left:292.0px;width:400px;text-align:center;">E</span>
<span style="top:199px;line-height:14px;font-size:12px;color:#383838;left:352.0px;width:400px;text-align:center;">F</span>
<span style="top:199px;line-height:14px;font-size:12px;color:#383838;left:441.5px;width:400px;text-align:center;">G</span>
<span style="top:199px;line-height:14px;font-size:12px;color:#383838;left:545.5px;width:400px;text-align:center;">H</span>
<span style="top:199px;line-height:14px;font-size:12px;color:#383838;left:597.5px;width:400px;text-align:center;">I</span>
<span style="top:199px;line-height:14px;font-size:12px;color:#383838;left:642.5px;width:400px;text-align:center;">J</span>
<span style="top:199px;line-height:14px;font-size:12px;color:#383838;left:700.5px;width:400px;text-align:center;">K</span>
<span style="top:199px;line-height:14px;font-size:12px;color:#383838;left:758.5px;width:400px;text-align:center;">L</span>
<span style="top:199px;line-height:14px;font-size:12px;color:#383838;left:816.5px;width:400px;text-align:center;">M</span>
<span style="top:199px;line-height:14px;font-size:12px;color:#383838;left:874.5px;width:400px;text-align:center;">N</span>
<span style="top:199px;line-height:14px;font-size:12px;color:#383838;left:932.5px;width:400px;text-align:center;">O</span>
<span style="top:199px;line-height:14px;font-size:12px;color:#383838;left:990.5px;width:400px;text-align:center;">P</span>
<span style="top:199px;line-height:14px;font-size:12px;color:#383838;left:1048.5px;width:400px;text-align:center;">Q</span>
<span style="top:199px;line-height:14px;font-size:12px;color:#383838;left:1106.5px;width:400px;text-align:center;">R</span>
<span style="top:217px;line-height:14px;font-size:12px;color:#2c5a41;transform:scaleX(0.8194);transform-origin:50% 0;left:-187px;width:400px;text-align:center;">1</span>
<span style="top:235px;line-height:14px;font-size:12px;color:#383838;transform:scaleX(0.8194);transform-origin:50% 0;left:-187px;width:400px;text-align:center;">2</span>
<span style="top:253px;line-height:14px;font-size:12px;color:#383838;transform:scaleX(0.8194);transform-origin:50% 0;left:-187px;width:400px;text-align:center;">3</span>
<span style="top:276px;line-height:14px;font-size:12px;color:#383838;transform:scaleX(0.8194);transform-origin:50% 0;left:-187px;width:400px;text-align:center;">4</span>
<span style="top:299px;line-height:14px;font-size:12px;color:#383838;transform:scaleX(0.8194);transform-origin:50% 0;left:-187px;width:400px;text-align:center;">5</span>
<span style="top:322px;line-height:14px;font-size:12px;color:#383838;transform:scaleX(0.8194);transform-origin:50% 0;left:-187px;width:400px;text-align:center;">6</span>
<span style="top:345px;line-height:14px;font-size:12px;color:#383838;transform:scaleX(0.8194);transform-origin:50% 0;left:-187px;width:400px;text-align:center;">7</span>
<span style="top:368px;line-height:14px;font-size:12px;color:#383838;transform:scaleX(0.8194);transform-origin:50% 0;left:-187px;width:400px;text-align:center;">8</span>
<span style="top:386px;line-height:14px;font-size:12px;color:#383838;transform:scaleX(0.8194);transform-origin:50% 0;left:-187px;width:400px;text-align:center;">9</span>
<span style="top:404px;line-height:14px;font-size:12px;color:#383838;transform:scaleX(0.8593);transform-origin:50% 0;left:-187px;width:400px;text-align:center;">10</span>
<span style="top:422px;line-height:14px;font-size:12px;color:#383838;transform:scaleX(0.9207);transform-origin:50% 0;left:-187px;width:400px;text-align:center;">11</span>
<span style="top:445px;line-height:14px;font-size:12px;color:#383838;transform:scaleX(0.8593);transform-origin:50% 0;left:-187px;width:400px;text-align:center;">12</span>
<span style="top:468px;line-height:14px;font-size:12px;color:#383838;transform:scaleX(0.8593);transform-origin:50% 0;left:-187px;width:400px;text-align:center;">13</span>
<span style="top:491px;line-height:14px;font-size:12px;color:#383838;transform:scaleX(0.8593);transform-origin:50% 0;left:-187px;width:400px;text-align:center;">14</span>
<span style="top:514px;line-height:14px;font-size:12px;color:#383838;transform:scaleX(0.8593);transform-origin:50% 0;left:-187px;width:400px;text-align:center;">15</span>
<span style="top:537px;line-height:14px;font-size:12px;color:#383838;transform:scaleX(0.8593);transform-origin:50% 0;left:-187px;width:400px;text-align:center;">16</span>
<span style="top:560px;line-height:14px;font-size:12px;color:#383838;transform:scaleX(0.8593);transform-origin:50% 0;left:-187px;width:400px;text-align:center;">17</span>
<span style="top:583px;line-height:14px;font-size:12px;color:#383838;transform:scaleX(0.8593);transform-origin:50% 0;left:-187px;width:400px;text-align:center;">18</span>
<span style="top:606px;line-height:14px;font-size:12px;color:#383838;transform:scaleX(0.8593);transform-origin:50% 0;left:-187px;width:400px;text-align:center;">19</span>
<span style="top:629px;line-height:14px;font-size:12px;color:#383838;transform:scaleX(0.8593);transform-origin:50% 0;left:-187px;width:400px;text-align:center;">20</span>
<span style="top:652px;line-height:14px;font-size:12px;color:#383838;transform:scaleX(0.8593);transform-origin:50% 0;left:-187px;width:400px;text-align:center;">21</span>
<span style="top:675px;line-height:14px;font-size:12px;color:#383838;transform:scaleX(0.8593);transform-origin:50% 0;left:-187px;width:400px;text-align:center;">22</span>
<div style="left:24px;top:213px;width:193px;height:21px;border:2px solid #217346;box-sizing:border-box;"></div>
<div style="left:213px;top:230px;width:6px;height:6px;background:#217346;border:1px solid #fff;box-sizing:border-box;"></div>
<div style="left:311px;top:232px;width:399px;height:1px;background:#000;"></div>
<div style="left:311px;top:268px;width:399px;height:1px;background:#000;"></div>
<div style="left:311px;top:291px;width:399px;height:1px;background:#000;"></div>
<div style="left:311px;top:232px;width:1px;height:60px;background:#000;"></div>
<div style="left:453px;top:232px;width:1px;height:60px;background:#000;"></div>
<div style="left:573px;top:232px;width:1px;height:60px;background:#000;"></div>
<div style="left:709px;top:232px;width:1px;height:60px;background:#000;"></div>
<div style="left:530px;top:268px;width:1px;height:24px;background:#000;"></div>
<span style="top:243px;line-height:16px;font-size:14.8px;color:#000;font-weight:700;letter-spacing:-0.115px;left:29.60px;">Focus on varialble overhead</span>
<span style="top:252px;line-height:15px;font-size:12.8px;color:#000;font-weight:700;letter-spacing:-0.342px;left:363.10px;">Actual results</span>
<span style="top:233px;line-height:15px;font-size:12.8px;color:#000;font-weight:700;letter-spacing:-0.435px;left:468.60px;">Flexible Budget</span>
<span style="top:252px;line-height:15px;font-size:12.8px;color:#000;font-weight:700;letter-spacing:-0.280px;left:488.10px;">Variance</span>
<span style="top:252px;line-height:15px;font-size:12.8px;color:#000;font-weight:700;letter-spacing:-0.435px;left:609.60px;">Flexible Budget</span>
<span style="top:273px;line-height:17px;font-size:15.6px;color:#000;font-weight:700;letter-spacing:0.338px;left:396.10px;">30,160</span>
<span style="top:273px;line-height:17px;font-size:15.6px;color:#000;font-weight:700;letter-spacing:0.215px;left:482.10px;">8,840</span>
<span style="top:273px;line-height:17px;font-size:15.6px;color:#000;font-weight:700;transform:scaleX(0.9329);transform-origin:0 0;left:542.10px;">F</span>
<span style="top:273px;line-height:17px;font-size:15.6px;color:#000;font-weight:700;letter-spacing:0.338px;left:652.10px;">39,000</span>
<span style="top:320px;line-height:16px;font-size:14.8px;color:#000;font-weight:700;letter-spacing:-0.003px;left:29.60px;">Why did we spend less on variable overhead? Did we use less of the allocation base, or was the actual</span>
<span style="top:343px;line-height:16px;font-size:14.8px;color:#000;font-weight:700;letter-spacing:0.021px;left:29.60px;">cost of the variable overhead less than expected?</span>
<span style="top:389px;line-height:16px;font-size:14.8px;color:#000;font-weight:700;letter-spacing:-0.014px;left:29.60px;">We can split the flexible budget variance for variable overhead into an efficiency variance and a cost</span>
<span style="top:412px;line-height:16px;font-size:14.8px;color:#000;font-weight:700;letter-spacing:0.023px;left:29.60px;">variance to figure this out. In order to do this we need to know our standard usage and standard costs:</span>
<span style="top:466px;line-height:16px;font-size:14.8px;color:#000;font-weight:700;letter-spacing:-0.012px;left:29.60px;">(In this example, the allocation base is direct labor hours)</span>
<span style="top:512px;line-height:16px;font-size:14.8px;color:#000;font-weight:700;letter-spacing:-0.056px;left:29.60px;">Direct labor efficiency standard:</span>
<span style="top:512px;line-height:16px;font-size:14.8px;color:#000;font-weight:700;letter-spacing:-0.011px;left:457.10px;">0.25 hours per batch of crayons</span>
<span style="top:535px;line-height:16px;font-size:14.8px;color:#000;font-weight:700;letter-spacing:0.048px;left:29.60px;">Direct labor hours allowed by the standard for the actual</span>
<span style="top:558px;line-height:16px;font-size:14.8px;color:#000;font-weight:700;letter-spacing:0.186px;left:29.60px;">level of output:</span>
<span style="top:545px;line-height:16px;font-size:14.8px;color:#000;font-weight:700;letter-spacing:0.814px;left:457.10px;">13,000</span>
<span style="top:581px;line-height:16px;font-size:14.8px;color:#000;font-weight:700;letter-spacing:-0.013px;left:29.60px;">Variable overhead cost standard:</span>
<span style="top:581px;line-height:16px;font-size:14.8px;color:#000;font-weight:700;letter-spacing:1.076px;left:457.10px;">$3.00</span>
<span style="top:581px;line-height:16px;font-size:14.8px;color:#000;font-weight:700;letter-spacing:0.081px;left:534.10px;">per direct labor hour</span>
<span style="top:627px;line-height:16px;font-size:14.8px;color:#000;font-weight:700;letter-spacing:0.062px;left:29.60px;">We then need to compare this with the actual usage and actual cost:</span>
<span style="top:673px;line-height:16px;font-size:14.8px;color:#000;font-weight:700;letter-spacing:0.300px;left:29.60px;">Actual amount of direct labor hours used:</span>
<span style="top:673px;line-height:16px;font-size:14.8px;color:#000;font-weight:700;letter-spacing:0.396px;left:457.10px;">10,400 hours</span>
<svg style="left:351px;top:531px" width="82" height="82"><circle cx="40.3" cy="40.8" r="34.5" fill="none" stroke="rgba(244,238,52,0.92)" stroke-width="3.7"/></svg>
<svg style="left:383px;top:564px" width="16" height="16" viewBox="0 0 16 16" shape-rendering="crispEdges"><path d="M5 1H10V5H14V10H10V14H5V10H1V5H5Z" fill="#fff" stroke="#000" stroke-width="1.2"/></svg>
<div style="left:0px;top:678px;width:1356px;height:28px;background:#e6e6e6;"></div>
<div style="left:0px;top:678px;width:1345px;height:1px;background:#a6a6a6;"></div>
<div style="left:0px;top:706px;width:1356px;height:1px;background:#c9c9c9;"></div>
<div style="left:0px;top:707px;width:1356px;height:5px;background:#f3f3f3;"></div>
<div style="left:1074px;top:707px;width:38px;height:5px;background:#c8c8c8;"></div>
<div style="left:1086px;top:710px;width:13px;height:1px;background:#555;"></div>
<div style="left:1086px;top:711px;width:1px;height:1px;background:#555;"></div>
<div style="left:1098px;top:711px;width:1px;height:1px;background:#555;"></div>
<div style="left:1090px;top:711px;width:1px;height:1px;background:#555;"></div>
<div style="left:1094px;top:711px;width:1px;height:1px;background:#555;"></div>
<div style="left:1124px;top:710px;width:14px;height:1px;background:#555;"></div>
<div style="left:1124px;top:711px;width:1px;height:1px;background:#555;"></div>
<div style="left:1137px;top:711px;width:1px;height:1px;background:#555;"></div>
<div style="left:1162px;top:710px;width:14px;height:1px;background:#555;"></div>
<div style="left:1162px;top:711px;width:1px;height:1px;background:#555;"></div>
<div style="left:1175px;top:711px;width:1px;height:1px;background:#555;"></div>
<div style="left:1166px;top:711px;width:1px;height:1px;background:#555;"></div>
<div style="left:1171px;top:711px;width:1px;height:1px;background:#555;"></div>
<div style="left:1246px;top:710px;width:4px;height:2px;background:#555;"></div>
<div style="left:1345px;top:198px;width:11px;height:480px;background:#e6e6e6;"></div>
<div style="left:1348px;top:201px;width:9px;height:14px;background:#fff;border:1px solid #ababab;box-sizing:border-box;"></div>
<div style="left:1348px;top:215px;width:9px;height:214px;background:#fff;border:1px solid #ababab;box-sizing:border-box;"></div>
<div style="left:1349px;top:429px;width:8px;height:235px;background:#dadada;"></div>
<div style="left:1348px;top:664px;width:9px;height:14px;background:#fff;border:1px solid #ababab;box-sizing:border-box;"></div>
<svg style="left:1352px;top:205px" width="5" height="6"><path d="M0 5H5V0Z" fill="#666"/></svg>
<svg style="left:1352px;top:668px" width="5" height="6"><path d="M0 0H5V5Z" fill="#666"/></svg>
<div style="left:100px;top:683px;width:1px;height:19px;background:#ababab;"></div>
<div style="left:201px;top:683px;width:1px;height:19px;background:#ababab;"></div>
<div style="left:349px;top:683px;width:1px;height:19px;background:#ababab;"></div>
<div style="left:456px;top:683px;width:1px;height:19px;background:#ababab;"></div>
<div style="left:559px;top:678px;width:103px;height:25px;background:#fff;"></div>
<div style="left:558px;top:678px;width:1px;height:25px;background:#ababab;"></div>
<div style="left:662px;top:678px;width:1px;height:25px;background:#ababab;"></div>
<div style="left:558px;top:701px;width:105px;height:2px;background:#217346;"></div>
<span style="top:685px;line-height:14px;font-size:12.3px;color:#444444;letter-spacing:0.554px;left:114.80px;">Introduction</span>
<span style="top:685px;line-height:14px;font-size:12.3px;color:#444444;letter-spacing:0.469px;left:217.30px;">Static &amp; flex budget</span>
<span style="top:685px;line-height:14px;font-size:12.3px;color:#444444;letter-spacing:0.335px;left:363.30px;">DM variances</span>
<span style="top:685px;line-height:14px;font-size:12.3px;color:#444444;letter-spacing:0.141px;left:470.30px;">DL variances</span>
<span style="top:685px;line-height:14px;font-size:12.3px;color:#217346;font-weight:700;letter-spacing:0.220px;left:570.80px;">VO variances</span>
<span style="top:685px;line-height:14px;font-size:12.3px;color:#444444;letter-spacing:0.067px;left:676.30px;">FO variances</span>
<span style="top:682px;line-height:17px;font-size:15px;color:#1e5a37;font-weight:700;letter-spacing:-0.233px;left:758.80px;">...</span>
<svg style="left:27px;top:688px" width="5" height="8"><path d="M5 0V8L0 4Z" fill="#c4c4c4"/></svg>
<svg style="left:55.5px;top:688px" width="5" height="8"><path d="M0 0V8L5 4Z" fill="#217346"/></svg>
<svg style="left:782px;top:684px" width="17" height="17"><circle cx="8.5" cy="8.5" r="7.3" fill="none" stroke="#666" stroke-width="1.2"/><path d="M4.5 8.5H12.5M8.5 4.5V12.5" stroke="#555" stroke-width="1.5"/></svg>
<div style="left:818px;top:686px;width:2px;height:2px;background:#b5b5b5;"></div>
<div style="left:818px;top:691px;width:2px;height:2px;background:#b5b5b5;"></div>
<div style="left:818px;top:696px;width:2px;height:2px;background:#b5b5b5;"></div>
<div style="left:836px;top:685px;width:15px;height:15px;background:#fff;border:1px solid #ababab;box-sizing:border-box;"></div>
<div style="left:850px;top:685px;width:453px;height:15px;background:#fff;border:1px solid #ababab;box-sizing:border-box;"></div>
<div style="left:1303px;top:686px;width:27px;height:13px;background:#dadada;"></div>
<div style="left:1330px;top:685px;width:15px;height:15px;background:#fff;border:1px solid #ababab;box-sizing:border-box;"></div>
<svg style="left:841px;top:688.5px" width="4" height="8"><path d="M4 0V8L0 4Z" fill="#777"/></svg>
<svg style="left:1336px;top:688.5px" width="4" height="8"><path d="M0 0V8L4 4Z" fill="#777"/></svg>
</div></body></html>
